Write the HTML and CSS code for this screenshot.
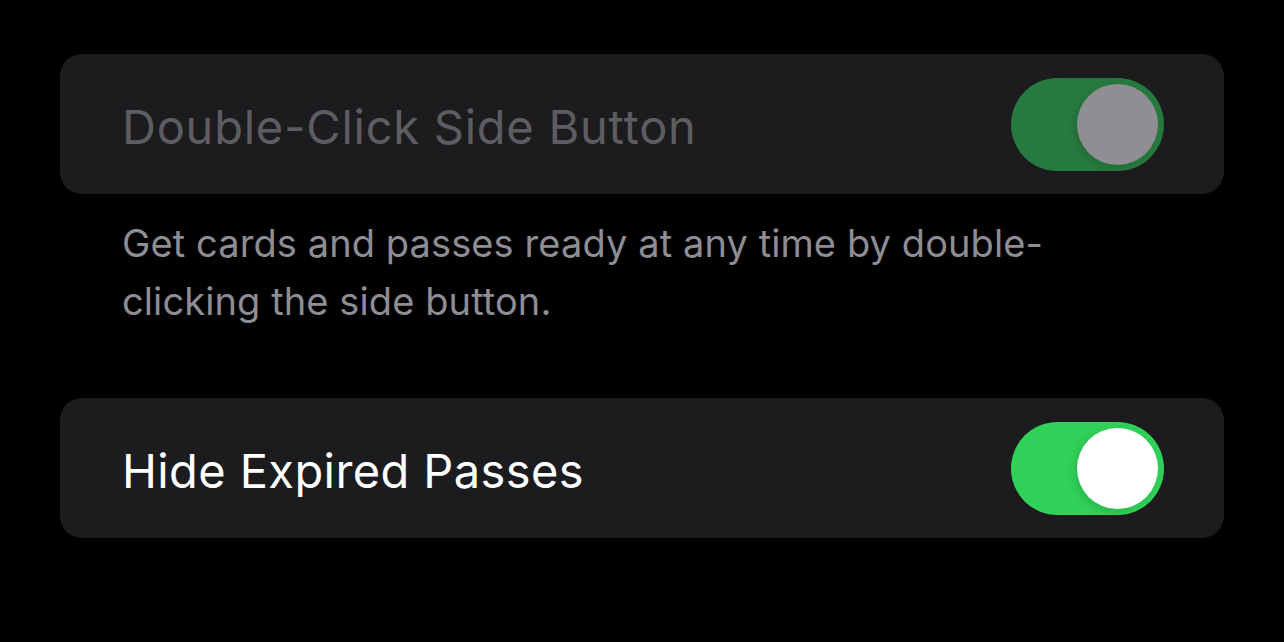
FILE: index.html
```html
<!DOCTYPE html>
<html lang="en">
<head>
    <meta charset="UTF-8" />
    <meta name="viewport" content="width=device-width, initial-scale=1.0"/>
    <title>Wallet Settings</title>
    <link rel="stylesheet" href="styles.css">
</head>
<body>
<div class="settings">
    <div class="group">
        <div class="row">
            <span class="label disabled">Double-Click Side Button</span>
            <span class="switch on dim"><span class="knob"></span></span>
        </div>
    </div>
    <div class="footer">Get cards and passes ready at any time by double-clicking the side button.</div>

    <div class="group">
        <div class="row">
            <span class="label">Hide Expired Passes</span>
            <span class="switch on"><span class="knob"></span></span>
        </div>
    </div>
</div>
</body>
</html>
```

FILE: styles.css
```css
html, body { margin: 0; padding: 0; }
body {
    background: #000;
    font-family: 'Inter', 'Open Sans', sans-serif;
    -webkit-font-smoothing: antialiased;
}
.settings { display: flex; flex-direction: column; padding: 54px 60px 0 60px; }
.group { background: #1c1c1e; border-radius: 22px; }
.row {
    height: 140px; display: flex; align-items: center; justify-content: space-between;
    padding: 0 60px 0 62px;
}
.label { font-size: 47px; color: #fff; letter-spacing: 0.4px; padding-top: 4px; }
.label.disabled { color: #5c5c61; letter-spacing: 0.75px; }
.footer {
    padding: 20px 60px 0 62px; margin-bottom: 68px;
    font-size: 38px; line-height: 58px; color: #8d8d93; letter-spacing: 0.1px;
}
.switch {
    width: 153px; height: 93px; border-radius: 47px; box-sizing: border-box;
    background: #3a3a3c; display: flex; align-items: center; padding: 0 6px;
}
.switch.on { background: #30d158; justify-content: flex-end; }
.switch.on.dim { background: #277a3f; }
.knob {
    width: 81px; height: 81px; border-radius: 50%; background: #fff;
    box-shadow: -3px 3px 8px rgba(0,0,0,0.12);
}
.switch.dim .knob { background: #8e8e93; }
```
